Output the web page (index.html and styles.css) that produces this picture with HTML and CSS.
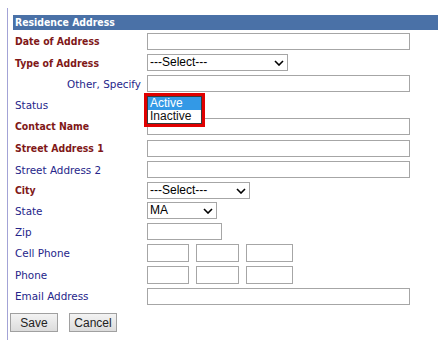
FILE: index.html
```
<!DOCTYPE html>
<html>
	<head>
		<meta charset="UTF-8">
		<title>Residence Address</title>
		<link rel="stylesheet" href="styles.css">
	</head>
	<body>
		<div class="panel">
			<table class="form">
				<tr>
					<th colspan="2" class="head">Residence Address</th>
				</tr>
				<tr class="tall">
					<td class="lbl req">Date of Address</td>
					<td><input type="text" class="txt wide"/></td>
				</tr>
				<tr>
					<td class="lbl req">Type of Address</td>
					<td><select class="sel type"><option>---Select---</option></select></td>
				</tr>
				<tr>
					<td class="lbl right">Other, Specify</td>
					<td><input type="text" class="txt wide"/></td>
				</tr>
				<tr>
					<td class="lbl">Status</td>
					<td class="status">
						<div class="dropwrap">
							<div class="droplist">
								<div class="opt on">Active</div>
								<div class="opt">Inactive</div>
							</div>
						</div>
					</td>
				</tr>
				<tr class="tall">
					<td class="lbl req">Contact Name</td>
					<td><input type="text" class="txt wide"/></td>
				</tr>
				<tr class="tall">
					<td class="lbl req">Street Address 1</td>
					<td><input type="text" class="txt wide"/></td>
				</tr>
				<tr>
					<td class="lbl">Street Address 2</td>
					<td><input type="text" class="txt wide"/></td>
				</tr>
				<tr class="short">
					<td class="lbl req">City</td>
					<td><select class="sel city"><option>---Select---</option></select></td>
				</tr>
				<tr>
					<td class="lbl">State</td>
					<td><select class="sel state"><option>MA</option></select></td>
				</tr>
				<tr>
					<td class="lbl">Zip</td>
					<td><input type="text" class="txt zip"/></td>
				</tr>
				<tr class="tall">
					<td class="lbl">Cell Phone</td>
					<td class="phone">
						<input type="text" class="txt p1"/><input type="text" class="txt p2"/><input type="text" class="txt p3"/>
					</td>
				</tr>
				<tr>
					<td class="lbl">Phone</td>
					<td class="phone">
						<input type="text" class="txt p1"/><input type="text" class="txt p2"/><input type="text" class="txt p3"/>
					</td>
				</tr>
				<tr class="tall">
					<td class="lbl">Email Address</td>
					<td><input type="text" class="txt wide"/></td>
				</tr>
			</table>
			<div class="btns">
				<input type="button" class="btn" value="Save"/>
				<input type="button" class="btn" value="Cancel"/>
			</div>
		</div>
	</body>
</html>
```
FILE: styles.css
```
body{
	margin: 0;
	padding: 0;
	background: #fff;
	font-family: "DejaVu Sans", Verdana, sans-serif;
}
.panel{
	margin: 8px 0 0 7px;
	padding: 7px 0 8px 4px;
	border-left: 1px solid #a3a3d6;
	width: 430px;
}
.form{
	border-collapse: collapse;
	border-spacing: 0;
	width: 425px;
	margin-left: 1px;
}
.form td{
	padding: 0;
	height: 21px;
	vertical-align: middle;
}
.form tr.tall td{
	height: 22px;
}
.form tr.short td{
	height: 20px;
}
.head{
	background: #4a71a7;
	color: #fff;
	font: bold 10.4px/15px "DejaVu Sans Condensed", "DejaVu Sans", sans-serif;
	text-align: left;
	height: 15px;
	padding: 0 0 0 2px;
}
.lbl{
	width: 132px;
	padding-left: 2px !important;
	font-size: 10.4px;
	color: #25258a;
	white-space: nowrap;
}
.req{
	color: #801818;
	font-weight: bold;
	font-family: "DejaVu Sans Condensed", "DejaVu Sans", sans-serif;
}
.right{
	text-align: right;
	padding-right: 6px !important;
	width: 126px;
}
.txt{
	margin: 0;
	padding: 0 2px;
	height: 17px;
	border: 1px solid #a6a6a6;
	box-sizing: border-box;
	display: block;
	background: #fff;
}
.wide{
	width: 263px;
}
.zip{
	width: 75px;
}
.phone{
	display: flex;
	gap: 7px;
	align-items: center;
}
.phone .txt{
	height: 18px;
}
.p1{
	width: 42px;
}
.p2{
	width: 43px;
}
.p3{
	width: 47px;
}
.sel{
	margin: 0;
	-webkit-appearance: none;
	appearance: none;
	display: block;
	height: 17px;
	padding: 0 0 0 2px;
	border: 1px solid #a6a6a6;
	box-sizing: border-box;
	font: 12px/15px "Liberation Sans", Arial, sans-serif;
	color: #000;
	background: #fff url("data:image/svg+xml;utf8,<svg xmlns='http://www.w3.org/2000/svg' width='10' height='6'><path d='M1 1 L5 5 L9 1' fill='none' stroke='%23000' stroke-width='1.6'/></svg>") no-repeat;
}
.type{
	width: 141px;
	background-position: 126px 5px;
}
.city{
	width: 103px;
	background-position: 88px 5px;
}
.state{
	width: 70px;
	background-position: 55px 5px;
}
.status{
	position: relative;
}
.dropwrap{
	position: absolute;
	left: -3px;
	top: -1px;
	width: 55px;
	border: 3px solid #e00000;
	background: #fff;
	padding: 0;
}
.droplist{
	border: 1px solid #3a3a3a;
	font: 12px/13px "Liberation Sans", Arial, sans-serif;
	color: #111;
	background: #fff;
}
.opt{
	padding-left: 2px;
	height: 13px;
}
.opt.on{
	background: #3399e6;
	color: #fff;
}
.btns{
	display: flex;
	gap: 11px;
	margin-top: 6px;
	margin-left: -2px;
}
.btn{
	margin: 0;
	padding: 0;
	width: 48px;
	height: 19px;
	border: 1px solid #a0a0a0;
	background: linear-gradient(#f3f3f3, #dcdcdc);
	font: 12px "Liberation Sans", Arial, sans-serif;
	color: #222;
}
```
